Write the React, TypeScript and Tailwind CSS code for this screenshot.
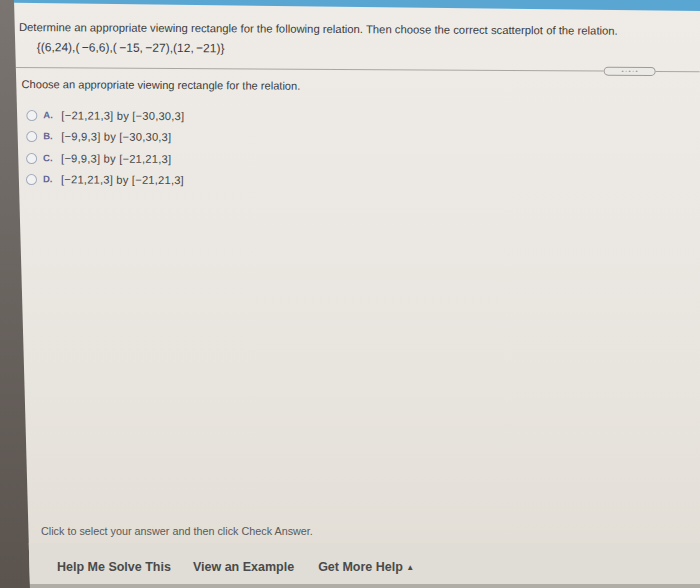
import React from "react";

const options = [
  { l: "A.", t: "[\u221221,21,3] by [\u221230,30,3]" },
  { l: "B.", t: "[\u22129,9,3] by [\u221230,30,3]" },
  { l: "C.", t: "[\u22129,9,3] by [\u221221,21,3]" },
  { l: "D.", t: "[\u221221,21,3] by [\u221221,21,3]" },
];

export default function App() {
  return (
    <div
      className="w-[700px] h-[588px] overflow-hidden bg-[linear-gradient(180deg,#7a7571,#5a534e)] flex flex-col"
      style={{ fontFamily: '"Liberation Sans", Arial, sans-serif' }}
    >
      <div className="flex-1 ml-[14px] flex flex-col [clip-path:polygon(0_0,100%_0,100%_100%,16px_100%)] bg-[linear-gradient(180deg,#efece8_0%,#ebe8e3_40%,#e6e2db_80%,#e1dcd4_100%)]">
        <div className="h-[11px] bg-[#5aa6d2] [clip-path:polygon(0_0,100%_0,100%_100%,0_25%)]" />
        <div className="flex flex-col rotate-[0.35deg] origin-top-left">
          <div className="mt-[9px] pl-[5px] text-[11.3px] leading-[14px] text-[#3c3c3c] whitespace-nowrap">
            Determine an appropriate viewing rectangle for the following relation. Then choose the correct scatterplot of the relation.
          </div>
          <div className="mt-[6px] pl-[23px] text-[12px] leading-[14px] text-[#3e3e3e] whitespace-nowrap">
            {"{(6,24),(\u2009\u22126,6),(\u2009\u221215,\u2009\u221227),(12,\u2009\u221221)}"}
          </div>
          <div className="mt-[9px] flex items-center">
            <div className="flex-1 h-px bg-[#a9a6a2]" />
            <div className="w-[52px] h-[9px] rounded-full border border-[#9d9b98] bg-[#eceae7] flex items-center justify-center gap-[2px]">
              {[0, 1, 2, 3, 4].map((i) => (
                <span key={i} className="w-[1.5px] h-[1.5px] rounded-full bg-[#8c8a88]" />
              ))}
            </div>
            <div className="w-[44px] h-px bg-[#a9a6a2]" />
          </div>
          <div className="mt-[5px] pl-[8px] text-[11.1px] leading-[14px] text-[#3c3c3c] whitespace-nowrap">
            Choose an appropriate viewing rectangle for the relation.
          </div>
          <div className="mt-[17px] pl-[13px] flex flex-col gap-[7.5px]">
            {options.map((o) => (
              <div key={o.l} className="flex items-center h-[14px]">
                <span className="w-[11px] h-[11px] rounded-full border border-[#a3abbd] bg-[#f2f2f2]" />
                <span className="ml-[6px] w-[18px] text-[9.5px] font-bold text-[#5f6694]">{o.l}</span>
                <span className="text-[11.2px] text-[#474747] whitespace-nowrap tracking-[0.2px]">{o.t}</span>
              </div>
            ))}
          </div>
        </div>
        <div className="flex-1" />
        <div className="pl-[27px] text-[10.8px] leading-[14px] text-[#5a5a5a] whitespace-nowrap">
          Click to select your answer and then click Check Answer.
        </div>
        <div className="mt-[5px] bg-[#dfddd6] h-[41px] pt-[7px] pl-[43px] flex items-center text-[12.5px] font-bold text-[#4a4a4a] whitespace-nowrap">
          <span>Help Me Solve This</span>
          <span className="ml-[22px]">View an Example</span>
          <span className="ml-[24px]">Get More Help <span className="text-[8px] align-middle">▲</span></span>
        </div>
        <div className="h-[4px] bg-[#b0ada7]" />
      </div>
    </div>
  );
}
